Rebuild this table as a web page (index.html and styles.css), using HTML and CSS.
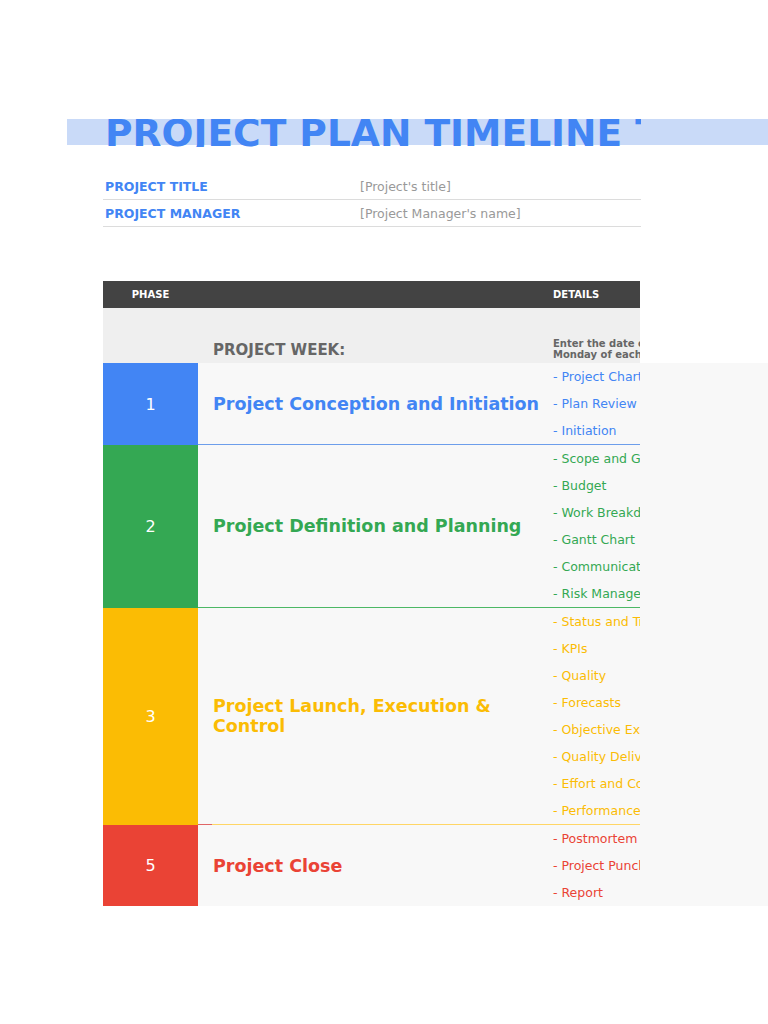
FILE: index.html
```html
<!DOCTYPE html>
<html>
<head>
<meta charset="utf-8">
<link rel="stylesheet" href="styles.css">
</head>
<body>
<div class="band">
  <h1 class="title">PROJECT PLAN TIMELINE TEMPLATE</h1>
</div>

<div class="info">
  <div class="info-row"><span class="info-label">PROJECT TITLE</span><span class="info-value">[Project's title]</span></div>
  <div class="info-row"><span class="info-label">PROJECT MANAGER</span><span class="info-value">[Project Manager's name]</span></div>
</div>

<div class="table">
  <div class="thead">
    <div class="c-phase">PHASE</div>
    <div class="c-title"></div>
    <div class="c-details">DETAILS</div>
  </div>
  <div class="week">
    <div class="c-phase"></div>
    <div class="c-title week-label">PROJECT WEEK:</div>
    <div class="c-details week-note">Enter the date of<br>Monday of each week</div>
  </div>

  <div class="row blue">
    <div class="num">1</div>
    <div class="main">
      <div class="c-title name">Project Conception and Initiation</div>
      <ul class="c-details items">
        <li>- Project Charter</li>
        <li>- Plan Review</li>
        <li>- Initiation</li>
      </ul>
    </div>
  </div>

  <div class="row green">
    <div class="num">2</div>
    <div class="main">
      <div class="c-title name">Project Definition and Planning</div>
      <ul class="c-details items">
        <li>- Scope and Goal Setting</li>
        <li>- Budget</li>
        <li>- Work Breakdown Schedule</li>
        <li>- Gantt Chart</li>
        <li>- Communication Plan</li>
        <li>- Risk Management</li>
      </ul>
    </div>
  </div>

  <div class="row yellow">
    <div class="num">3</div>
    <div class="main">
      <div class="c-title name">Project Launch, Execution &amp; Control</div>
      <ul class="c-details items">
        <li>- Status and Tracking</li>
        <li>- KPIs</li>
        <li>- Quality</li>
        <li>- Forecasts</li>
        <li>- Objective Execution</li>
        <li>- Quality Deliverables</li>
        <li>- Effort and Cost Tracking</li>
        <li>- Performance</li>
      </ul>
    </div>
  </div>

  <div class="row red last">
    <div class="num">5</div>
    <div class="main">
      <div class="c-title name">Project Close</div>
      <ul class="c-details items">
        <li>- Postmortem</li>
        <li>- Project Punchlist</li>
        <li>- Report</li>
      </ul>
    </div>
  </div>
</div>
</body>
</html>
```

FILE: styles.css
```css
html, body {
  margin: 0;
  padding: 0;
  background: #ffffff;
}
body {
  width: 768px;
  font-family: "DejaVu Sans", "Liberation Sans", sans-serif;
}

.band {
  margin: 119px 0 0 67px;
  height: 26px;
  background: #c9daf8;
}
.title {
  margin: 0 0 0 38px;
  width: 536px;
  height: 28px;
  font-size: 37.6px;
  font-weight: bold;
  line-height: 28px;
  color: #4285f4;
  white-space: nowrap;
  overflow: clip;
  overflow-clip-margin: 0;
  clip-path: inset(-20px 0 0 0);
  display: flex;
  align-items: flex-end;
}

.info {
  margin: 28px 0 0 103px;
  width: 538px;
}
.info-row {
  display: flex;
  align-items: center;
  height: 26px;
  border-bottom: 1px solid #dcdcdc;
  font-size: 12.5px;
}
.info-label {
  width: 255px;
  padding-left: 2px;
  font-weight: bold;
  color: #4285f4;
}
.info-value {
  color: #999999;
}

.table {
  margin: 54px 0 0 103px;
  width: 665px;
}
.thead {
  display: flex;
  width: 537px;
  height: 27px;
  align-items: center;
  background: #434343;
  color: #ffffff;
  font-size: 10px;
  font-weight: bold;
}
.c-phase {
  width: 95px;
  flex: none;
  text-align: center;
}
.c-title {
  width: 327px;
  flex: none;
  padding-left: 15px;
}
.c-details {
  width: 87px;
  flex: none;
  padding-left: 13px;
  overflow: hidden;
  white-space: nowrap;
}

.week {
  display: flex;
  width: 537px;
  height: 55px;
  align-items: flex-end;
  background: #efefef;
}
.week-label {
  font-size: 15px;
  font-weight: bold;
  color: #666666;
  padding-bottom: 4px;
}
.week-note {
  font-size: 10px;
  font-weight: bold;
  color: #666666;
  line-height: 11px;
  padding-bottom: 3px;
}

.row {
  display: flex;
  background: #f8f8f8;
}
.num {
  width: 95px;
  flex: none;
  display: flex;
  align-items: center;
  justify-content: center;
  color: #ffffff;
  font-size: 16px;
}
.main {
  position: relative;
  display: flex;
  align-items: center;
  width: 442px;
  border-bottom: 1px solid;
}
.name {
  font-size: 17.5px;
  font-weight: bold;
  line-height: 20px;
}
.items {
  list-style: none;
  margin: 0;
  font-size: 12.5px;
  line-height: 27px;
}
.last .main {
  border-bottom: none;
}

.blue .num { background: #4285f4; }
.blue .main { color: #4285f4; border-bottom-color: #6d9eeb; }
.green .num { background: #34a853; }
.green .main { color: #34a853; border-bottom-color: #4cb865; }
.yellow .num { background: #fbbc04; }
.yellow .main { color: #fbbc04; border-bottom-color: #ffd666; }
.yellow .main::after {
  content: "";
  position: absolute;
  left: 0;
  bottom: -1px;
  width: 14px;
  height: 1px;
  background: #e06666;
}
.red .num { background: #ea4335; }
.red .main { color: #ea4335; }
```
